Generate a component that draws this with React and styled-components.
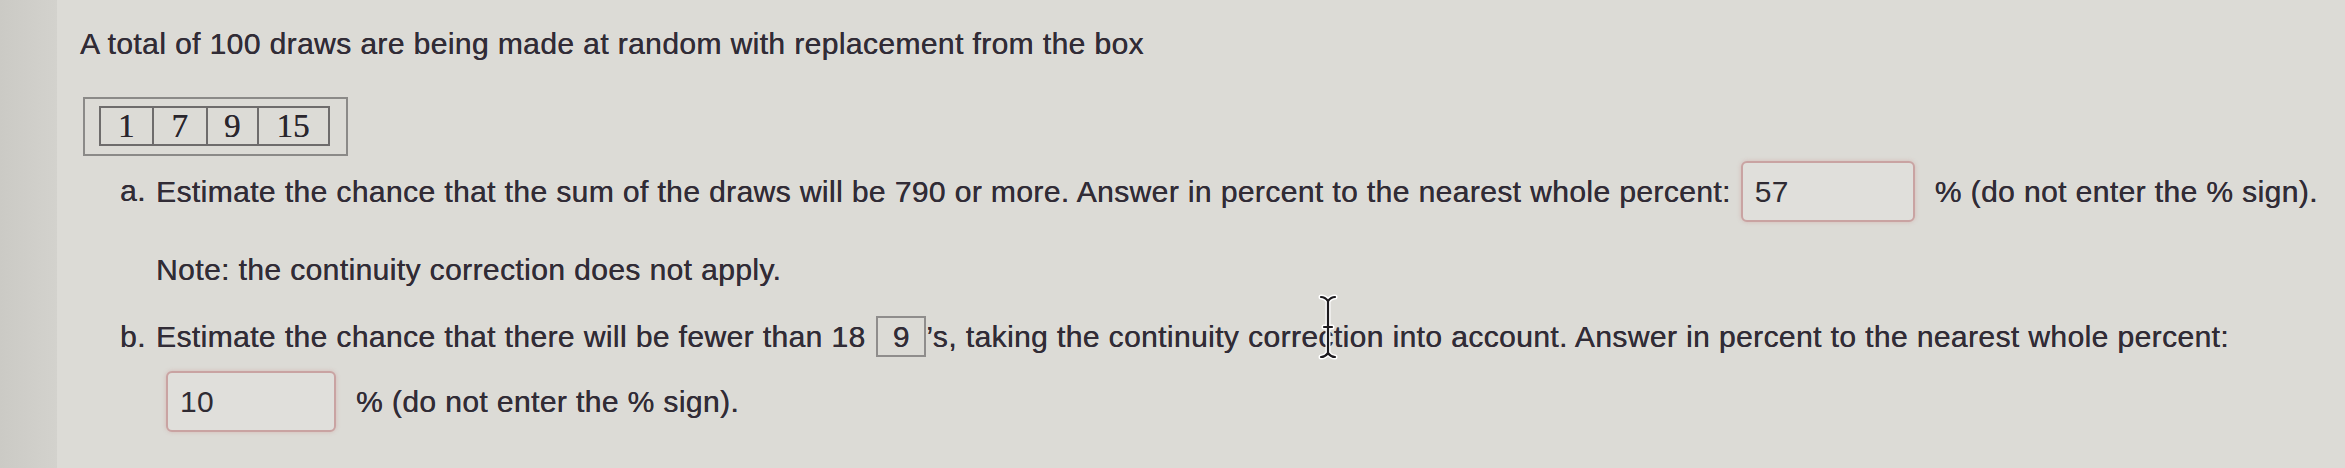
import React from "react";
import styled, { createGlobalStyle } from "styled-components";

const GlobalStyle = createGlobalStyle`
  html, body {
    margin: 0;
    padding: 0;
    background: #cfcec9;
  }
  body {
    font-family: "Liberation Sans", Arial, sans-serif;
  }
`;

const Page = styled.div`
  display: flex;
  width: 2345px;
  height: 468px;
  overflow: hidden;
`;

const LeftRail = styled.div`
  width: 57px;
  flex: none;
  background: linear-gradient(90deg, #cbcac5, #d3d2cd);
`;

const Panel = styled.div`
  position: relative;
  flex: 1;
  padding: 24px 2px 0 23px;
  background: #dcdbd6;
  color: #312c36;
  font-size: 30px;
  line-height: 40px;
  letter-spacing: 0.4px;
  text-shadow: 0.3px 0 0 #312c36;
`;

const Intro = styled.p`
  margin: 0;
`;

const BoxOuter = styled.div`
  display: inline-flex;
  margin: 33px 0 0 3px;
  padding: 7px 16px 8px 14px;
  border: 2px solid #8b8a88;
`;

const Ticket = styled.div`
  padding: 0 ${(p) => p.pad}px;
  border: 2px solid #6e6c6c;
  margin-left: ${(p) => (p.first ? "0" : "-2px")};
  font-family: "Liberation Serif", "Times New Roman", serif;
  font-size: 33px;
  line-height: 36px;
  letter-spacing: 0;
  color: #2a262c;
`;

const Item = styled.div`
  display: flex;
  margin: ${(p) => p.gap}px 0 0 40px;
  line-height: 60px;
`;

const Marker = styled.div`
  width: 36px;
  flex: none;
`;

const Body = styled.div`
  flex: 1;
`;

const Line = styled.p`
  margin: 0;
`;

const Note = styled.p`
  margin: 28px 0 0;
  line-height: 40px;
`;

const Answer = styled.input`
  box-sizing: border-box;
  width: ${(p) => p.w}px;
  height: 61px;
  margin: ${(p) => p.drop || 0}px 20px 0 10px;
  padding: 0 12px;
  border: 2px solid #c9a3a2;
  border-radius: 6px;
  background: #e0dfdb;
  box-shadow: 0 0 4px rgba(196, 120, 120, 0.35);
  font-family: "Liberation Sans", Arial, sans-serif;
  font-size: 30px;
  letter-spacing: 0.4px;
  color: #2f2b33;
  outline: none;
`;

const Slot = styled.span`
  display: inline-block;
  box-sizing: border-box;
  width: 50px;
  height: 41px;
  margin-left: 2px;
  border: 2px solid #8f8d8c;
  text-align: center;
  line-height: 37px;
`;

const Cursor = styled.svg`
  position: absolute;
  left: 1260px;
  top: 294px;
`;

const draws = [
  { v: "1", pad: 17 },
  { v: "7", pad: 18 },
  { v: "9", pad: 16 },
  { v: "15", pad: 18 },
];

const App = () => {
  return (
    <>
      <GlobalStyle />
      <Page>
        <LeftRail />
        <Panel>
          <Intro>
            A total of 100 draws are being made at random with replacement from the box
          </Intro>
          <BoxOuter>
            {draws.map((d, i) => (
              <Ticket key={d.v} pad={d.pad} first={i === 0}>
                {d.v}
              </Ticket>
            ))}
          </BoxOuter>

          <Item gap={5}>
            <Marker>a.</Marker>
            <Body>
              <Line>
                Estimate the chance that the sum of the draws will be 790 or more. Answer in
                percent to the nearest whole percent:
                <Answer w={174} defaultValue="57" readOnly />% (do not enter the % sign).
              </Line>
              <Note>Note: the continuity correction does not apply.</Note>
            </Body>
          </Item>

          <Item gap={17}>
            <Marker>b.</Marker>
            <Body>
              <Line>
                Estimate the chance that there will be fewer than 18 <Slot>9</Slot>’s, taking
                the continuity correction into account. Answer in percent to the nearest whole
                percent: <Answer w={170} drop={4} defaultValue="10" readOnly />% (do not enter
                the % sign).
              </Line>
            </Body>
          </Item>

          <Cursor width="22" height="66" viewBox="0 0 22 66">
            <g fill="none" strokeLinecap="round">
              <path
                d="M4 3 Q8 3 11 7 Q14 3 18 3 M11 7 V59 M4 63 Q8 63 11 59 Q14 63 18 63 M7 33 H15"
                stroke="#fff"
                strokeWidth="5"
              />
              <path
                d="M4 3 Q8 3 11 7 Q14 3 18 3 M11 7 V59 M4 63 Q8 63 11 59 Q14 63 18 63 M7 33 H15"
                stroke="#1c1a1e"
                strokeWidth="2.2"
              />
            </g>
          </Cursor>
        </Panel>
      </Page>
    </>
  );
};

export default App;
